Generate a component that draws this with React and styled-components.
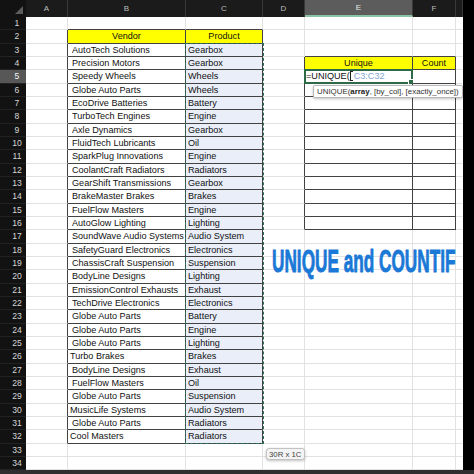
import React from 'react';
import styled, { createGlobalStyle } from 'styled-components';

const ROW_H = 40 / 3;
const COLS = [
  { key: 'A', w: 42 },
  { key: 'B', w: 118 },
  { key: 'C', w: 77 },
  { key: 'D', w: 42 },
  { key: 'E', w: 108 },
  { key: 'F', w: 43 },
  { key: 'G', w: 7 },
];
const TEMPLATE = `26px ${COLS.map((c) => c.w + 'px').join(' ')} 11px`;

const DATA = [
  ['AutoTech Solutions', 'Gearbox'],
  ['Precision Motors', 'Gearbox'],
  ['Speedy Wheels', 'Wheels'],
  ['Globe Auto Parts', 'Wheels'],
  ['EcoDrive Batteries', 'Battery'],
  ['TurboTech Engines', 'Engine'],
  ['Axle Dynamics', 'Gearbox'],
  ['FluidTech Lubricants', 'Oil'],
  ['SparkPlug Innovations', 'Engine'],
  ['CoolantCraft Radiators', 'Radiators'],
  ['GearShift Transmissions', 'Gearbox'],
  ['BrakeMaster Brakes', 'Brakes'],
  ['FuelFlow Masters', 'Engine'],
  ['AutoGlow Lighting', 'Lighting'],
  ['SoundWave Audio Systems', 'Audio System'],
  ['SafetyGuard Electronics', 'Electronics'],
  ['ChassisCraft Suspension', 'Suspension'],
  ['BodyLine Designs', 'Lighting'],
  ['EmissionControl Exhausts', 'Exhaust'],
  ['TechDrive Electronics', 'Electronics'],
  ['Globe Auto Parts', 'Battery'],
  ['Globe Auto Parts', 'Engine'],
  ['Globe Auto Parts', 'Lighting'],
  ['Turbo Brakes', 'Brakes', true],
  ['BodyLine Designs', 'Exhaust'],
  ['FuelFlow Masters', 'Oil'],
  ['Globe Auto Parts', 'Suspension'],
  ['MusicLife Systems', 'Audio System', true],
  ['Globe Auto Parts', 'Radiators'],
  ['Cool Masters', 'Radiators', true],
];

const GRID = '#e2e2e2';
const DARK = '#424242';
const YELLOW = '#ffff00';
const TINT = '#e9eef9';

const Global = createGlobalStyle`
  html, body { margin: 0; padding: 0; background: #000; }
  body { font-family: "Liberation Sans", Arial, sans-serif; }
  * { box-sizing: border-box; }
`;

const Screen = styled.div`
  position: relative;
  width: 474px;
  height: 474px;
  overflow: hidden;
  background: #000;
  display: flex;
  flex-direction: column;
`;

const HeaderRow = styled.div`
  display: grid;
  grid-template-columns: ${TEMPLATE};
  height: 17px;
  background: #1b1b1b;
  flex: none;
`;

const Corner = styled.div`
  position: relative;
  background: #121212;
  &::after {
    content: '';
    position: absolute;
    right: 3px;
    bottom: 3px;
    width: 0;
    height: 0;
    border-left: 8px solid transparent;
    border-bottom: 8px solid #5d5d5d;
  }
`;

const ColHead = styled.div`
  display: flex;
  align-items: center;
  justify-content: center;
  font-size: 8px;
  color: ${(p) => (p.$active ? '#e8e8e8' : '#bdbdbd')};
  background: ${(p) => (p.$active ? '#5c5c5c' : '#1b1b1b')};
  border-right: 1px solid #383838;
  border-bottom: ${(p) => (p.$active ? '2px solid #8cc2a4' : '0')};
`;

const Row = styled.div`
  display: grid;
  grid-template-columns: ${TEMPLATE};
  height: ${ROW_H}px;
  flex: none;
`;

const RowHead = styled.div`
  display: flex;
  align-items: center;
  justify-content: center;
  padding-left: 8px;
  font-size: 8.6px;
  color: ${(p) => (p.$active ? '#f4f4f4' : '#d6d6d6')};
  background: ${(p) => (p.$active ? '#575757' : '#121212')};
  border-bottom: 1px solid #222;
`;

const Cell = styled.div`
  position: relative;
  display: flex;
  align-items: center;
  justify-content: ${(p) => (p.$center ? 'center' : 'flex-start')};
  padding-left: ${(p) => p.$pl}px;
  min-width: 0;
  overflow: ${(p) => (p.$active ? 'visible' : 'hidden')};
  white-space: nowrap;
  font-size: 9.1px;
  color: #111;
  background: ${(p) => p.$bg};
  border-right: 1px solid ${(p) => p.$rb};
  border-bottom: 1px solid ${(p) => p.$bb};
`;

const ActiveFrame = styled.span`
  position: absolute;
  left: -1px;
  top: -1px;
  right: -1px;
  bottom: -1px;
  border: 2px solid #2d6b48;
  pointer-events: none;
  &::after {
    content: '';
    position: absolute;
    right: -3px;
    bottom: -3px;
    width: 4px;
    height: 4px;
    background: #2d6b48;
    border: 1px solid #fff;
  }
`;

const FormulaText = styled.span`
  color: #111;
  font-size: 9.1px;
  display: inline-flex;
  align-items: center;
  padding-left: 1px;
`;

const RefText = styled.span`
  color: #86a6cf;
`;

const Caret = styled.span`
  display: inline-block;
  width: 3px;
  height: 10px;
  margin: 0 1px 0 0;
  border-left: 1px solid #222;
  border-top: 1px solid #222;
  border-bottom: 1px solid #222;
`;

const Edge = styled.div`
  background: #000;
`;

const BottomBar = styled.div`
  flex: 1;
  background: #2f2f2f;
`;

const Marquee = styled.div`
  position: absolute;
  left: 185px;
  top: ${17 + 2 * ROW_H - 0.5}px;
  width: 79px;
  height: ${30 * ROW_H + 1}px;
  border: 1.5px dashed #2f6f5b;
  pointer-events: none;
`;

const Tooltip = styled.div`
  position: absolute;
  left: 313px;
  top: 85px;
  height: 12.5px;
  padding: 0 3px;
  display: flex;
  align-items: center;
  font-size: 7.9px;
  color: #333;
  background: #fff;
  border: 1px solid #b9b9b9;
  border-radius: 2px;
  box-shadow: 0 1px 3px rgba(0, 0, 0, 0.25);
  white-space: nowrap;
  b { font-weight: bold; color: #222; }
`;

const SizeBadge = styled.div`
  position: absolute;
  left: 266px;
  top: 448px;
  height: 12px;
  padding: 0 2px;
  display: flex;
  align-items: center;
  font-size: 7.8px;
  color: #444;
  background: #f4f4f4;
  border: 1px solid #c2c2c2;
  border-radius: 3px;
  box-shadow: 0 1px 3px rgba(0, 0, 0, 0.25);
`;

const Title = styled.div`
  position: absolute;
  left: 272px;
  top: 246px;
  font-family: "Liberation Sans", Arial, sans-serif;
  font-weight: bold;
  font-size: 31px;
  line-height: 31px;
  color: #1a78d6;
  white-space: nowrap;
  -webkit-text-stroke: 0.9px #1a78d6;
  transform: scaleX(0.555);
  transform-origin: left top;
`;

function cellStyle(r, key) {
  let bg = '#fff';
  let rb = GRID;
  let bb = GRID;
  const inT1 = r >= 2 && r <= 32;
  const inT2 = r >= 4 && r <= 16;
  if ((key === 'A' && inT1) || ((key === 'B' || key === 'C') && inT1)) rb = DARK;
  if ((key === 'D' && inT2) || ((key === 'E' || key === 'F') && inT2)) rb = DARK;
  if ((key === 'B' || key === 'C') && r >= 1 && r <= 32) bb = DARK;
  if ((key === 'E' || key === 'F') && r >= 3 && r <= 16) bb = DARK;
  if (key === 'G') rb = 'transparent';
  if ((r === 2 && (key === 'B' || key === 'C')) || (r === 4 && (key === 'E' || key === 'F'))) bg = YELLOW;
  if (key === 'C' && r >= 3 && r <= 32) bg = TINT;
  return { bg, rb, bb };
}

function cellContent(r, key) {
  if (r === 2 && key === 'B') return { text: 'Vendor', center: true };
  if (r === 2 && key === 'C') return { text: 'Product', center: true };
  if (r === 4 && key === 'E') return { text: 'Unique', center: true };
  if (r === 4 && key === 'F') return { text: 'Count', center: true };
  if (r >= 3 && r <= 32) {
    const d = DATA[r - 3];
    if (key === 'B') return { text: d[0], pl: d[2] ? 2 : 4 };
    if (key === 'C') return { text: d[1], pl: 2 };
  }
  return { text: '' };
}

export default function App() {
  const rows = [];
  for (let r = 1; r <= 34; r++) {
    rows.push(
      <Row key={r}>
        <RowHead $active={r === 5}>{r}</RowHead>
        {COLS.map((c) => {
          const s = cellStyle(r, c.key);
          const ct = cellContent(r, c.key);
          const active = r === 5 && c.key === 'E';
          return (
            <Cell
              key={c.key}
              $bg={s.bg}
              $rb={s.rb}
              $bb={s.bb}
              $center={ct.center}
              $pl={ct.pl || 0}
              $active={active}
            >
              {active ? (
                <>
                  <FormulaText>
                    =UNIQUE(<Caret />
                    <RefText>C3:C32</RefText>
                  </FormulaText>
                  <ActiveFrame />
                </>
              ) : (
                ct.text
              )}
            </Cell>
          );
        })}
        <Edge />
      </Row>
    );
  }

  return (
    <>
      <Global />
      <Screen>
        <HeaderRow>
          <Corner />
          {COLS.map((c) => (
            <ColHead key={c.key} $active={c.key === 'E'}>
              {c.key === 'G' ? '' : c.key}
            </ColHead>
          ))}
          <Edge />
        </HeaderRow>
        {rows}
        <BottomBar />
        <Marquee />
        <Tooltip>
          UNIQUE(<b>array</b>, [by_col], [exactly_once])
        </Tooltip>
        <Title>UNIQUE and COUNTIF</Title>
        <SizeBadge>30R x 1C</SizeBadge>
      </Screen>
    </>
  );
}
